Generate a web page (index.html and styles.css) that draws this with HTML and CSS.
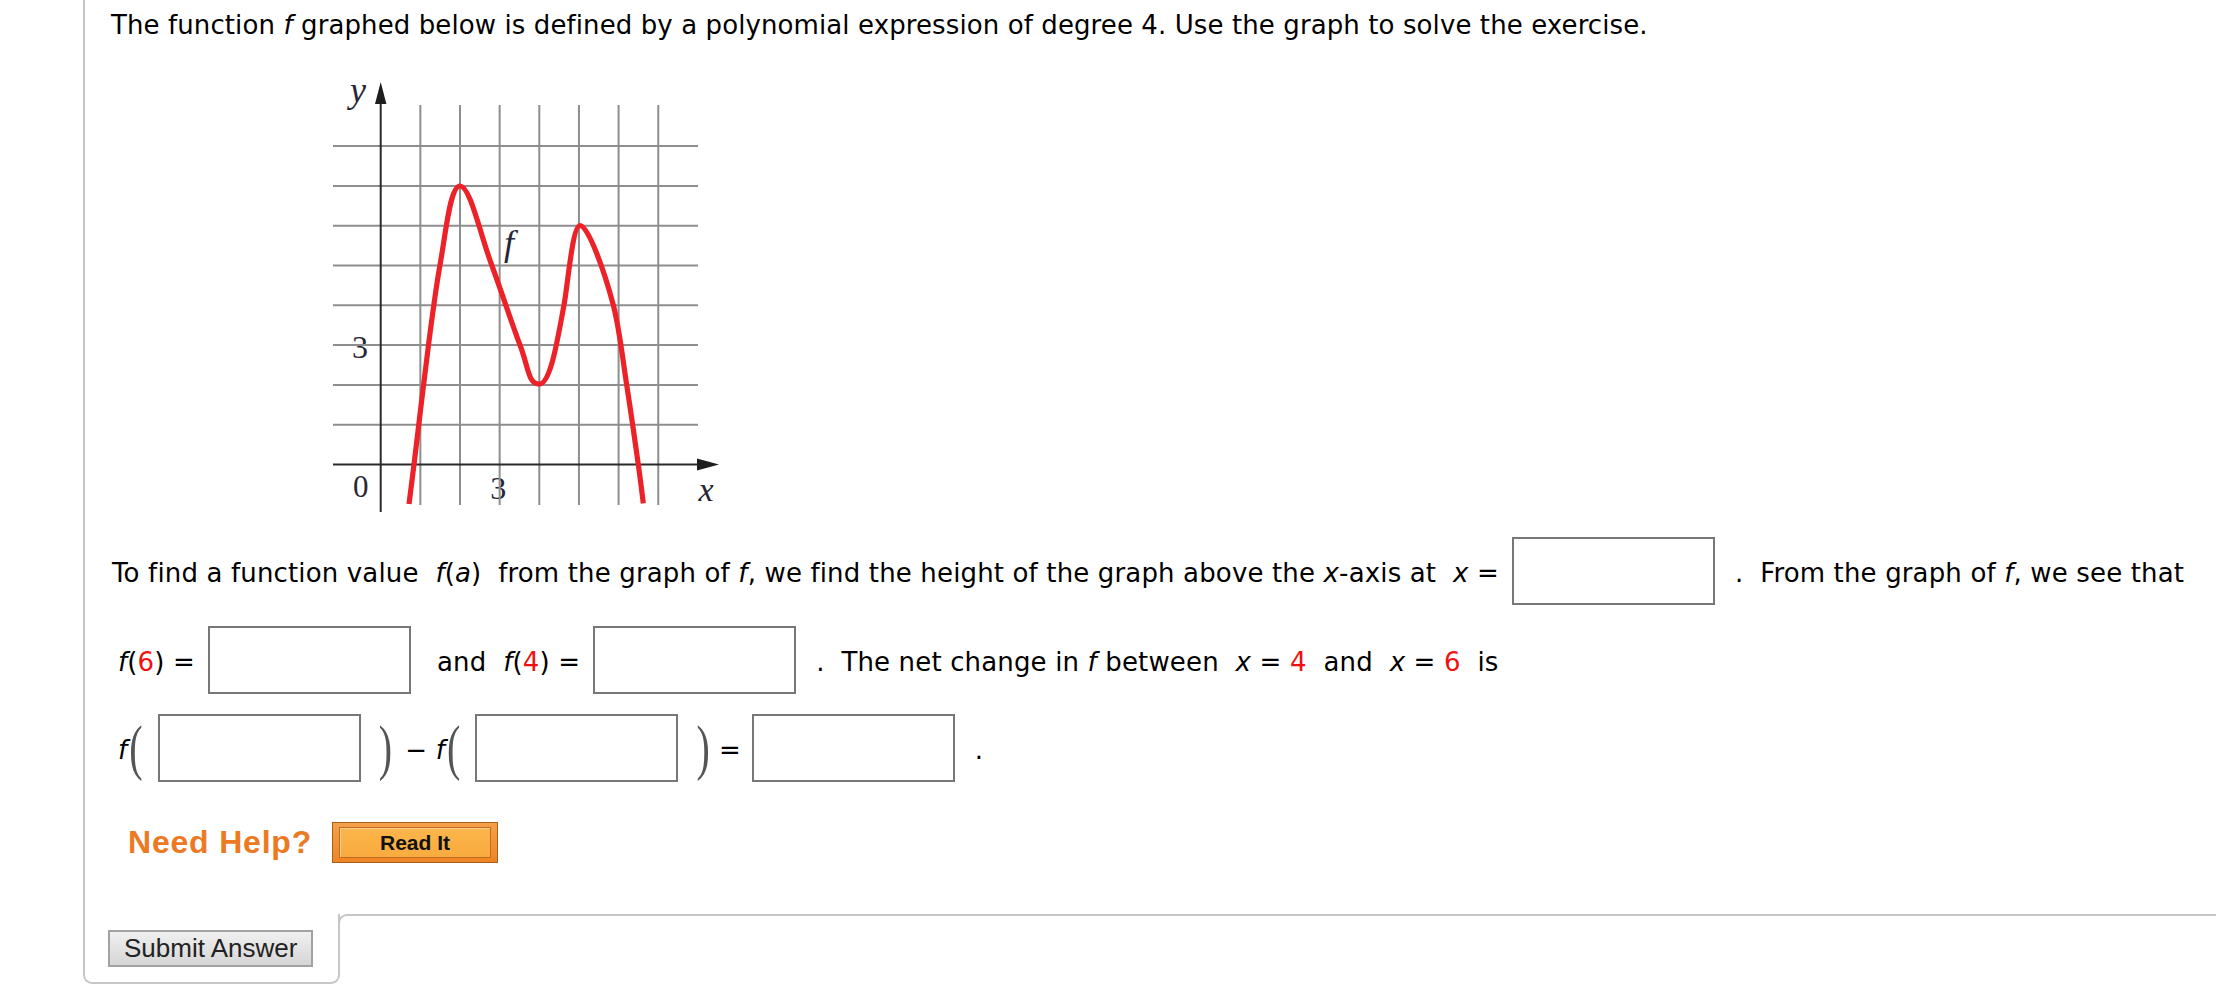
FILE: index.html
```html
<!DOCTYPE html>
<html lang="en">
<head>
<meta charset="utf-8">
<title>Polynomial graph exercise</title>
<link rel="stylesheet" href="styles.css">
</head>
<body>
<div class="panel">
  <p class="prompt">The function <i>f</i> graphed below is defined by a polynomial expression of degree 4. Use the graph to solve the exercise.</p>

  <svg class="graph" width="395" height="460" viewBox="0 0 395 460" aria-label="Graph of f">
    <g transform="translate(0,20)">
      <g class="lbl">
        <text x="28" y="24" class="it" font-size="36">y</text>
        <text x="30" y="280.3" font-size="32">3</text>
        <text x="30.8" y="418.7" font-size="31">0</text>
        <text x="168.3" y="421.3" font-size="32">3</text>
        <text x="376" y="423" class="it" font-size="34">x</text>
        <text x="179" y="176.5" class="it" font-size="36">f</text>
      </g>
      <g class="grid">
        <line x1="90.35" y1="27" x2="90.35" y2="427"/>
        <line x1="130" y1="27" x2="130" y2="427"/>
        <line x1="169.65" y1="27" x2="169.65" y2="427"/>
        <line x1="209.3" y1="27" x2="209.3" y2="427"/>
        <line x1="248.95" y1="27" x2="248.95" y2="427"/>
        <line x1="288.6" y1="27" x2="288.6" y2="427"/>
        <line x1="328.25" y1="27" x2="328.25" y2="427"/>
        <line x1="3" y1="68.1" x2="368" y2="68.1"/>
        <line x1="3" y1="107.9" x2="368" y2="107.9"/>
        <line x1="3" y1="147.7" x2="368" y2="147.7"/>
        <line x1="3" y1="187.5" x2="368" y2="187.5"/>
        <line x1="3" y1="227.3" x2="368" y2="227.3"/>
        <line x1="3" y1="267.1" x2="368" y2="267.1"/>
        <line x1="3" y1="306.9" x2="368" y2="306.9"/>
        <line x1="3" y1="346.7" x2="368" y2="346.7"/>
      </g>
      <g class="axis">
        <line x1="3" y1="386.5" x2="372" y2="386.5"/>
        <line x1="50.7" y1="434" x2="50.7" y2="22"/>
      </g>
      <polygon class="arrow" points="367,380.5 389,386.5 367,392.5"/>
      <polygon class="arrow" points="45,26 50.7,4 56.4,26"/>
      <path class="curve" d="M79,426 C79.83,419.42 80.75,413 84,386.5 C87.25,360 94.17,300.25 98.5,267 C102.83,233.75 105.75,210.67 110,187 C116,154 120,108 130,108 C140,108 149.6,154 161.7,187 C170.37,210.67 183.33,249.5 190,267 C198.7,289.75 198,306 209.3,306 C220.5,306 227.6,261.7 234,227 C238,205.3 242.5,147.5 250,147.5 C258.5,147.5 275.1,195.6 283.3,227 C289.58,251.17 292.53,280.42 296.7,307 C300.87,333.58 305.53,366.78 308.3,386.5 C311.07,406.22 312.47,418.83 313.3,425.3"/>
    </g>
  </svg>

  <div class="row r1">
    <span class="t">To find a function value&nbsp; <i>f</i>(<i>a</i>)&nbsp; from the graph of <i>f</i>, we find the height of the graph above the <i>x</i>-axis at&nbsp; <i>x</i> =</span>
    <input class="box" type="text" aria-label="x">
    <span class="t after">.&nbsp; From the graph of <i>f</i>, we see that</span>
  </div>

  <div class="row r2">
    <span class="t"><i>f</i>(<span class="red">6</span>) =</span>
    <input class="box" type="text" aria-label="f(6)">
    <span class="t and">and&nbsp; <i>f</i>(<span class="red">4</span>) =</span>
    <input class="box" type="text" aria-label="f(4)">
    <span class="t after">.&nbsp; The net change in <i>f</i> between&nbsp; <i>x</i> = <span class="red">4</span>&nbsp; and&nbsp; <i>x</i> = <span class="red">6</span>&nbsp; is</span>
  </div>

  <div class="row r3">
    <span class="t"><i>f</i></span>
    <span class="paren open">(</span>
    <input class="box" type="text" aria-label="first argument">
    <span class="paren close">)</span>
    <span class="t minus">&minus; <i>f</i></span>
    <span class="paren open second">(</span>
    <input class="box" type="text" aria-label="second argument">
    <span class="paren close">)</span>
    <span class="t eq">=</span>
    <input class="box b3" type="text" aria-label="net change">
    <span class="t after">.</span>
  </div>

  <div class="help">
    <span class="need">Need Help?</span>
    <button class="readit" type="button"><span class="readit-in">Read It</span></button>
  </div>
</div>

<div class="footer">
  <div class="tab">
    <button class="submit" type="button">Submit Answer</button>
  </div>
  <div class="rest"></div>
</div>
</body>
</html>
```

FILE: styles.css
```css
html, body {
  margin: 0;
  padding: 0;
  background: #ffffff;
}

body {
  font-family: "DejaVu Sans", Verdana, sans-serif;
  color: #000;
}

.panel {
  margin-left: 83px;
  border-left: 2px solid #c6c6c6;
  padding: 10px 0 51px 26px;
}

.prompt {
  margin: 0;
  font-size: 26px;
  letter-spacing: 0.1px;
  line-height: 30px;
  white-space: nowrap;
}

i {
  font-style: italic;
}

.graph {
  display: block;
  margin: 18px 0 0 219px;
}

.graph .lbl text {
  font-family: "Liberation Serif", "Times New Roman", serif;
  fill: #262633;
  text-anchor: middle;
}

.graph .lbl .it {
  font-style: italic;
}

.graph .grid line {
  stroke: #8e8e8e;
  stroke-width: 2;
}

.graph .axis line {
  stroke: #2a2a2a;
  stroke-width: 2;
}

.graph .arrow {
  fill: #1e1e1e;
}

.graph .curve {
  fill: none;
  stroke: #ec2228;
  stroke-width: 5.2;
  stroke-linejoin: round;
}

.row {
  display: flex;
  align-items: center;
  font-size: 26px;
  letter-spacing: 0.15px;
  white-space: nowrap;
}

.row .t {
  line-height: 30px;
  padding-top: 4px;
}

.r1 {
  margin-top: 19px;
  padding-left: 1px;
}

.r2 {
  margin-top: 21px;
  padding-left: 7px;
}

.r3 {
  margin-top: 20px;
  padding-left: 7px;
}

.red {
  color: #f01010;
}

.box {
  width: 203px;
  height: 68px;
  box-sizing: border-box;
  border: 2px solid #777777;
  background: #fff;
  margin: 0 0 0 13px;
  padding: 0;
  font-size: 20px;
  flex: none;
}

.after {
  margin-left: 20px;
}

.and {
  margin-left: 26px;
}

.paren {
  display: inline-block;
  font-family: "Liberation Serif", "Times New Roman", serif;
  font-size: 40px;
  line-height: 40px;
  color: #555;
  transform: scaleY(1.55);
}

.paren.open {
  margin: 0 2px 0 2px;
}

.paren.open + .box {
  margin-left: 13px;
}

.paren.close {
  margin-left: 18px;
}

.minus {
  margin-left: 13px;
}

.paren.second {
  margin-left: 2px;
}

.eq {
  margin-left: 9px;
}

.b3 {
  margin-left: 11px;
}

.help {
  display: flex;
  align-items: center;
  margin-top: 40px;
  padding-left: 17px;
}

.need {
  font-family: "Liberation Sans", Arial, sans-serif;
  font-weight: bold;
  font-size: 32px;
  letter-spacing: 0.8px;
  color: #ec7a24;
}

.readit {
  margin-left: 20px;
  width: 166px;
  height: 41px;
  padding: 4px 6px;
  border: 1px solid #a85e1c;
  background: linear-gradient(#f5a04a, #ee8424);
  box-sizing: border-box;
  cursor: pointer;
}

.readit-in {
  display: flex;
  align-items: center;
  justify-content: center;
  height: 100%;
  box-sizing: border-box;
  border: 1px solid #c26c22;
  box-shadow: inset 1px 1px 0 #fdd08a;
  background: linear-gradient(#fcb54c, #f9ab3d);
  font-family: "Liberation Sans", Arial, sans-serif;
  font-weight: bold;
  font-size: 21px;
  color: #111;
}

.footer {
  display: flex;
  margin-left: 83px;
}

.tab {
  width: 257px;
  box-sizing: border-box;
  border: 2px solid #c6c6c6;
  border-top: none;
  border-radius: 0 0 9px 9px;
  padding: 16px 0 15px 23px;
}

.submit {
  display: block;
  height: 37px;
  padding: 0 14px;
  border: 2px solid #a2a2a2;
  background: linear-gradient(#f0f0f0, #d6d6d6);
  font-family: "Liberation Sans", Arial, sans-serif;
  font-size: 26px;
  color: #222;
  cursor: pointer;
}

.rest {
  flex: 1;
  height: 10px;
  margin-left: -2px;
  border-top: 2px solid #c6c6c6;
  border-left: 2px solid #c6c6c6;
  border-top-left-radius: 9px;
}
```
